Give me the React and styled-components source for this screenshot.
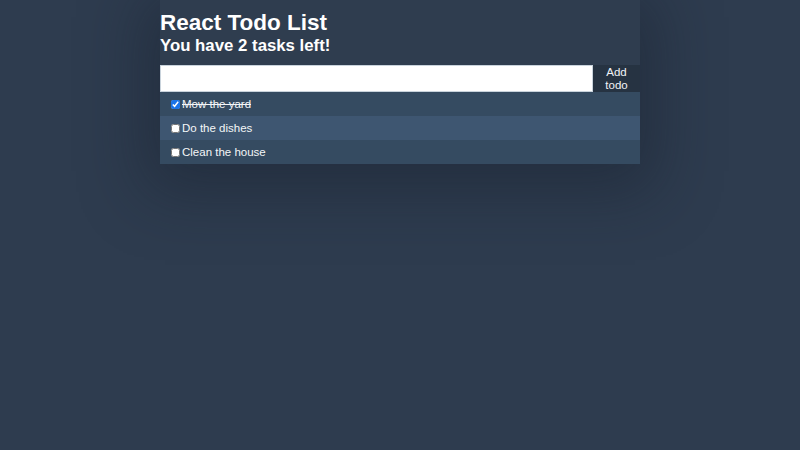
import React, { useState } from 'react';
import styled, { createGlobalStyle } from 'styled-components';

const GlobalStyle = createGlobalStyle`
  html, body {
    margin: 0;
    padding: 0;
    min-height: 100vh;
    background: #2e3c4f;
    font-family: "Liberation Sans", Arial, sans-serif;
    color: #fff;
  }
  #root {
    min-height: 100vh;
    display: flow-root;
  }
`;

const initialTodos = [
  { id: 1, text: 'Mow the yard', done: true },
  { id: 2, text: 'Do the dishes', done: false },
  { id: 3, text: 'Clean the house', done: false },
];

const App = () => {
  const [todos, setTodos] = useState(initialTodos);
  const [text, setText] = useState('');

  const toggle = (id) => {
    setTodos((prev) => prev.map((t) => (t.id === id ? { ...t, done: !t.done } : t)));
  };

  const addTodo = () => {
    if (!text.trim()) return;
    setTodos((prev) => [...prev, { id: Date.now(), text, done: false }]);
    setText('');
  };

  const left = todos.filter((t) => !t.done).length;

  return (
    <>
      <GlobalStyle />
      <Container>
        <Header>
          <Title>React Todo List</Title>
          <Subtitle>You have {left} tasks left!</Subtitle>
        </Header>
        <Form>
          <Input value={text} onChange={(e) => setText(e.target.value)} />
          <AddButton onClick={addTodo}>Add todo</AddButton>
        </Form>
        <List>
          {todos.map((t, i) => (
            <Item key={t.id} $alt={i % 2 === 1}>
              <Check type="checkbox" checked={t.done} onChange={() => toggle(t.id)} />
              <Label $done={t.done}>{t.text}</Label>
            </Item>
          ))}
        </List>
      </Container>
    </>
  );
};

const Container = styled.div`
  width: 480px;
  margin: 0 auto;
  background: #2f3d4f;
  box-shadow: 0 12px 60px 16px rgba(20, 28, 40, 0.4);
`;

const Header = styled.div`
  padding-top: 10px;
  padding-bottom: 10px;
`;

const Title = styled.h1`
  margin: 0;
  font-size: 22.5px;
  line-height: 26px;
  font-weight: bold;
`;

const Subtitle = styled.h2`
  margin: 0;
  font-size: 16.8px;
  line-height: 19px;
  font-weight: bold;
`;

const Form = styled.div`
  display: flex;
  height: 27px;
`;

const Input = styled.input`
  flex: 1;
  box-sizing: border-box;
  height: 27px;
  margin: 0;
  border: 1px solid #c9d3dc;
  background: #fff;
  outline: none;
  font-family: inherit;
`;

const AddButton = styled.button`
  width: 47px;
  padding: 0 4px;
  margin: 0;
  border: none;
  background: #263342;
  color: #f2f4f7;
  font-family: "Liberation Sans", Arial, sans-serif;
  font-size: 11.5px;
  line-height: 13px;
  cursor: pointer;
`;

const List = styled.ul`
  list-style: none;
  margin: 0;
  padding: 0;
`;

const Item = styled.li`
  display: flex;
  align-items: center;
  height: 24px;
  padding-left: 11px;
  background: ${(p) => (p.$alt ? '#3e5671' : '#354b61')};
`;

const Check = styled.input`
  width: 9px;
  height: 9px;
  margin: 1px 2px 0 0;
  accent-color: #1a73e8;
`;

const Label = styled.span`
  font-size: 11.5px;
  color: #f4f6f8;
  text-decoration: ${(p) => (p.$done ? 'line-through' : 'none')};
`;

export default App;
